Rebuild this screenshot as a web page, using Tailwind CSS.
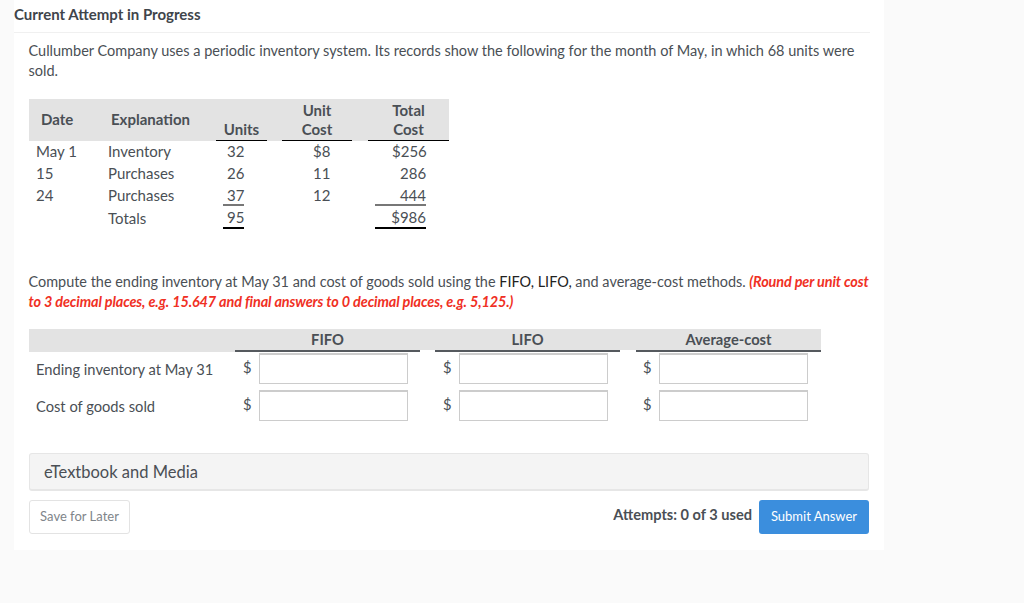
<!DOCTYPE html>
<html><head><script src="https://cdn.jsdelivr.net/npm/@tailwindcss/browser@4"></script></head>
<body class="bg-[#fafafa] font-['Lato',sans-serif] text-[#4a4f55]">
<div class="w-[1024px] h-[603px] overflow-hidden">
<div class="ml-[14px] w-[870px] h-[550px] bg-white">
  <div class="h-[33px] border-b border-[#f0f0f0] text-[15px] leading-[28px] font-bold text-[#3f454b] mr-[14px]">Current Attempt in Progress</div>
  <div class="pl-[15px] pr-[15px]">
    <p class="pt-[8px] -ml-[0.5px] text-[14.5px] leading-[19.5px] h-[66px]">Cullumber Company uses a periodic inventory system. Its records show the following for the month of May, in which 68 units were sold.</p>
    <div class="w-[420px] text-[15px]">
      <div class="grid grid-cols-[71px_116px_51px_15px_70px_16px_81px] h-[42px] bg-[#e3e3e3] font-bold text-[#4a4f55] leading-[19px]">
        <div class="pl-[12px] pt-[11px]">Date</div>
        <div class="pl-[11px] pt-[11px]">Explanation</div>
        <div class="flex items-end justify-center border-b border-black pb-[1px]">Units</div>
        <div></div>
        <div class="flex items-end justify-center text-center border-b border-black pb-[1px]">Unit<br>Cost</div>
        <div></div>
        <div class="flex items-end justify-center text-center border-b border-black pb-[1px]">Total<br>Cost</div>
      </div>
      <div class="grid grid-cols-[71px_116px_51px_15px_70px_16px_81px] leading-[22px] -mt-px">
        <div class="pl-[7px]">May 1</div><div class="pl-[8px]">Inventory</div><div class="pl-[11px]">32</div><div></div><div class="pl-[31px]">$8</div><div></div><div class="pl-[24px]">$256</div>
        <div class="pl-[7px]">15</div><div class="pl-[8px]">Purchases</div><div class="pl-[11px]">26</div><div></div><div class="pl-[31px]">11</div><div></div><div class="pl-[32px]">286</div>
        <div class="pl-[7px]">24</div><div class="pl-[8px]">Purchases</div><div class="pl-[7px]"><span class="block w-[21px] pl-[4px] h-[22px] border-b-2 border-[#777]">37</span></div><div></div><div class="pl-[31px]">12</div><div></div><div class="pl-[7px]"><span class="block w-[51px] text-right h-[22px] border-b-2 border-[#777]">444</span></div>
        <div class="pl-[7px]"></div><div class="pl-[8px] leading-[24px]">Totals</div><div class="pl-[7px]"><span class="block w-[21px] pl-[4px] h-[23px] leading-[22px] border-b-2 border-black">95</span></div><div></div><div></div><div></div><div class="pl-[7px]"><span class="block w-[51px] text-right h-[23px] leading-[22px] border-b-2 border-black">$986</span></div>
      </div>
    </div>
    <p class="mt-[42px] -ml-[0.5px] text-[14.44px] leading-[19.5px] whitespace-nowrap">Compute the ending inventory at May 31 and cost of goods sold using the <span class="text-[#222]">FIFO, LIFO,</span> and average-cost methods. <em class="font-bold text-[#f03024] tracking-[-0.12px]">(Round per unit cost</em><br><em class="font-bold text-[#f03024] tracking-[-0.12px]">to 3 decimal places, e.g. 15.647 and final answers to 0 decimal places, e.g. 5,125.)</em></p>
    <div class="mt-[18px] w-[792px] text-[14.7px]">
      <div class="grid grid-cols-[206px_185px_15px_185px_16px_185px] h-[23px] bg-[#e3e3e3] font-bold leading-[21px] text-center">
        <div></div>
        <div class="border-b-2 border-[#55595e]">FIFO</div>
        <div class="bg-white mt-[21px]"></div>
        <div class="border-b-2 border-[#55595e]">LIFO</div>
        <div class="bg-white mt-[21px]"></div>
        <div class="border-b-2 border-[#55595e]">Average-cost</div>
      </div>
      <div class="grid grid-cols-[206px_185px_15px_185px_16px_185px] grid-rows-[37px_31px] pt-[1px] h-[70px] items-start">
        <div class="pl-[7px] pt-[6px] leading-[20px]">Ending inventory at May 31</div>
        <div class="flex"><span class="w-[24px] pl-[8px] pt-[4px] leading-[20px]">$</span><span class="block w-[149px] h-[31px] border border-[#ccc] border-t-2 bg-white"></span></div>
        <div></div>
        <div class="flex"><span class="w-[24px] pl-[8px] pt-[4px] leading-[20px]">$</span><span class="block w-[149px] h-[31px] border border-[#ccc] border-t-2 bg-white"></span></div>
        <div></div>
        <div class="flex"><span class="w-[23px] pl-[7px] pt-[4px] leading-[20px]">$</span><span class="block w-[149px] h-[31px] border border-[#ccc] border-t-2 bg-white"></span></div>
        <div class="pl-[7px] pt-[6px] leading-[20px]">Cost of goods sold</div>
        <div class="flex"><span class="w-[24px] pl-[8px] pt-[4px] leading-[20px]">$</span><span class="block w-[149px] h-[31px] border border-[#ccc] border-t-2 bg-white"></span></div>
        <div></div>
        <div class="flex"><span class="w-[24px] pl-[8px] pt-[4px] leading-[20px]">$</span><span class="block w-[149px] h-[31px] border border-[#ccc] border-t-2 bg-white"></span></div>
        <div></div>
        <div class="flex"><span class="w-[23px] pl-[7px] pt-[4px] leading-[20px]">$</span><span class="block w-[149px] h-[31px] border border-[#ccc] border-t-2 bg-white"></span></div>
      </div>
    </div>
    <div class="mt-[31px] h-[38px] bg-[#f4f4f4] border border-[#e6e6e6] border-b-2 rounded-[3px] pl-[14px] text-[16.5px] leading-[36px] text-[#4a4f55]">eTextbook and Media</div>
    <div class="mt-[9px] flex items-start">
      <div class="w-[101px] h-[34px] border border-[#e3e3e3] rounded-[3px] text-[13px] leading-[31px] text-center text-[#80858a]">Save for Later</div>
      <div class="ml-auto pt-[4px] pr-[7px] text-[14.6px] leading-[22px] font-bold text-[#4a4f55]">Attempts: 0 of 3 used</div>
      <div class="w-[110px] h-[34px] rounded-[3px] bg-[#3b8edd] text-white text-[13px] leading-[33px] text-center">Submit Answer</div>
    </div>
  </div>
</div>
</div>
</body></html>
